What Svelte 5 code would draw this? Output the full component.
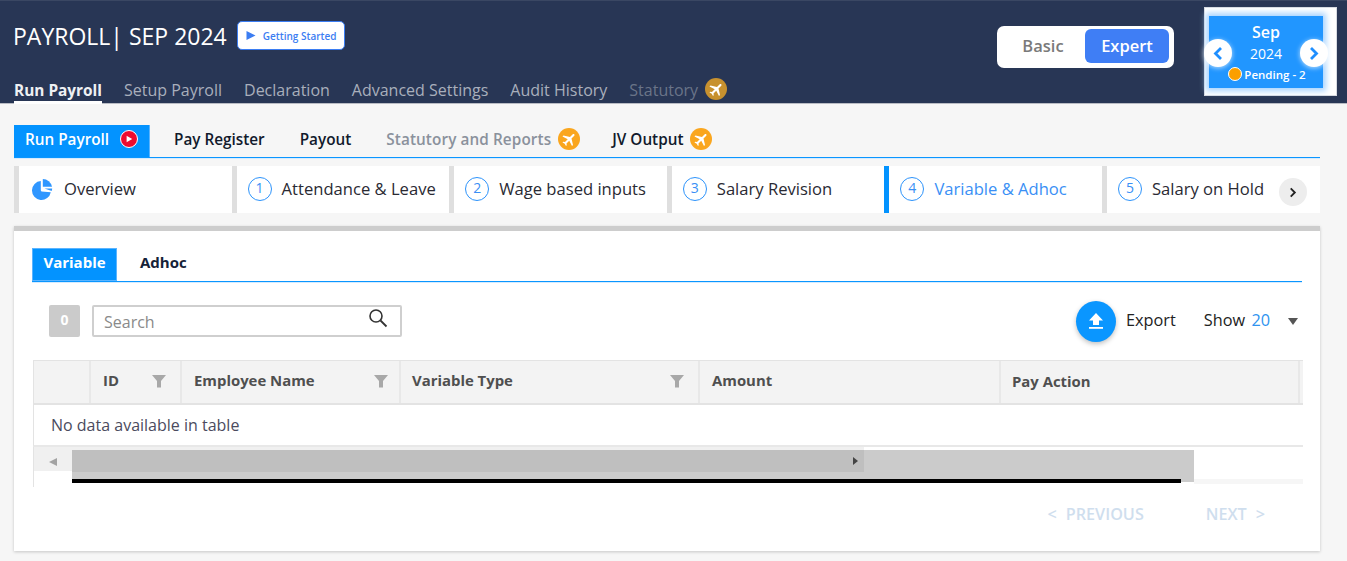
<script>
  const plane = "M21 16v-2l-8-5V3.5c0-.83-.67-1.5-1.5-1.5S10 2.67 10 3.5V9l-8 5v2l8-2.5V19l-2 1.5V22l3.5-1 3.5 1v-1.5L13 19v-5.5l8 2.5z";
  const nav = [
    { label: "Setup Payroll", cls: "" },
    { label: "Declaration", cls: "" },
    { label: "Advanced Settings", cls: "" },
    { label: "Audit History", cls: "" }
  ];
  const steps = [
    { n: 1, label: "Attendance & Leave" },
    { n: 2, label: "Wage based inputs" },
    { n: 3, label: "Salary Revision" },
    { n: 4, label: "Variable & Adhoc", active: true },
    { n: 5, label: "Salary on Hold" }
  ];
  const cols = [
    { label: "ID", w: 91, filter: true },
    { label: "Employee Name", w: 219, filter: true },
    { label: "Variable Type", w: 299, filter: true },
    { label: "Amount", w: 301 },
    { label: "Pay Action", w: 301 }
  ];
</script>

{#snippet planeBadge(cls)}
  <span class="badge {cls}">
    <svg viewBox="0 0 24 24" width="17" height="17"><path d={plane} fill="#fff" transform="rotate(45 12 12)" /></svg>
  </span>
{/snippet}

{#snippet funnel()}
  <svg class="funnel" viewBox="0 0 14 14" width="14" height="14"><path d="M0 1h14L9 7v6.5H5V7z" fill="#a8a8a8" /></svg>
{/snippet}

<div class="page">
  <header class="top">
    <div class="top-left">
      <div class="title-row">
        <h1>PAYROLL| SEP 2024</h1>
        <button class="started">
          <svg viewBox="0 0 10 10" width="10" height="11"><path d="M0.500 0.500 9.500 5 0.500 9.500z" fill="#3b7df2" /></svg>
          Getting Started
        </button>
      </div>
      <nav class="mainnav">
        <span class="navitem current">Run Payroll</span>
        {#each nav as item}
          <span class="navitem">{item.label}</span>
        {/each}
        <span class="navitem dim">Statutory</span>
        {@render planeBadge("muted")}
      </nav>
    </div>
    <div class="top-right">
      <div class="toggle">
        <span class="opt">Basic</span>
        <span class="opt on">Expert</span>
      </div>
      <div class="month-frame">
        <div class="month">
          <div class="m1">Sep</div>
          <div class="m2">2024</div>
          <div class="m3"><i class="dot"></i>Pending - 2</div>
          <span class="arrow prev">
            <svg viewBox="0 0 12 14" width="12" height="15"><path d="M9 1.500 3.500 7 9 12.500" fill="none" stroke="#1f8fff" stroke-width="2.800" /></svg>
          </span>
          <span class="arrow next">
            <svg viewBox="0 0 12 14" width="12" height="15"><path d="M3 1.500 8.500 7 3 12.500" fill="none" stroke="#1f8fff" stroke-width="2.800" /></svg>
          </span>
        </div>
      </div>
    </div>
  </header>

  <div class="content">
    <div class="tabs">
      <span class="tab active">Run Payroll
        <span class="yt"><svg viewBox="0 0 10 10" width="8" height="8"><path d="M2 1 9 5 2 9z" fill="#fff" /></svg></span>
      </span>
      <span class="tab t2">Pay Register</span>
      <span class="tab t3">Payout</span>
      <span class="tab t4 off">Statutory and Reports {@render planeBadge("")}</span>
      <span class="tab t5">JV Output {@render planeBadge("")}</span>
    </div>

    <div class="steps">
      <div class="step">
        <svg class="pie" viewBox="0 0 22 22" width="22" height="22">
          <path d="M9.800 3A9.500 9.500 0 1 0 19.800 14.300L10.500 13.500 9.800 12.500z" fill="#3097ff" />
          <path d="M11.800 1A9.500 9.500 0 0 1 21 8.700H11.800z" fill="#3097ff" />
          <path d="M13.500 10.500H21.200A9.500 9.500 0 0 1 20.700 13z" fill="#3097ff" />
        </svg>
        <span>Overview</span>
      </div>
      {#each steps as s}
        <div class="step" class:current={s.active}>
          <span class="num">{s.n}</span>
          <span>{s.label}</span>
        </div>
      {/each}
      <span class="more">
        <svg viewBox="0 0 8 12" width="8" height="11"><path d="M1.500 1.500 6 6l-4.500 4.500" fill="none" stroke="#222" stroke-width="2" /></svg>
      </span>
    </div>

    <section class="card">
      <div class="subtabs">
        <span class="sub active">Variable</span>
        <span class="sub">Adhoc</span>
      </div>

      <div class="toolbar">
        <span class="count">0</span>
        <div class="search">
          <span class="ph">Search</span>
          <svg viewBox="0 0 20 20" width="20" height="20"><circle cx="8" cy="8" r="6" fill="none" stroke="#333" stroke-width="1.600" /><path d="M12.500 12.500 18.500 18.500" stroke="#333" stroke-width="1.800" /></svg>
        </div>
        <div class="spacer"></div>
        <span class="export-btn">
          <svg viewBox="0 0 16 18" width="16" height="18"><path d="M8 1 15 8.500H11V13H5V8.500H1z" fill="#fff" /><rect x="1" y="15" width="14" height="1.800" fill="#fff" /></svg>
        </span>
        <span class="export">Export</span>
        <span class="show">Show <b>20</b></span>
        <i class="caret"></i>
      </div>

      <div class="table">
        <div class="thead">
          <div class="th first"></div>
          {#each cols as c}
            <div class="th" style="width:{c.w}px">
              <span>{c.label}</span>
              {#if c.filter}{@render funnel()}{/if}
            </div>
          {/each}
        </div>
        <div class="empty">No data available in table</div>
        <div class="scroll">
          <div class="sc-strip"></div>
          <div class="sc-track"></div>
          <div class="sc-thumb"></div>
          <div class="sc-black"></div>
          <div class="sc-light"></div>
          <i class="sc-l"></i>
          <i class="sc-r"></i>
        </div>
      </div>

      <div class="pager">
        <span class="pg prevp"><em>&lt;</em>PREVIOUS</span>
        <span class="pg">NEXT<em class="r">&gt;</em></span>
      </div>
    </section>
  </div>
</div>

<style>
  :global(body) { margin: 0; background: #f6f6f6; }
  .page { width: 1347px; height: 561px; overflow: hidden; font-family: "Open Sans", "Liberation Sans", sans-serif; color: #222; background: #f6f6f6; }

  .top { height: 104px; box-sizing: border-box; background: #283655; border-top: 1px solid #3a4763; border-bottom: 1px solid #b9bcc4; display: flex; justify-content: space-between; }
  .top-left { padding: 20px 0 0 14px; display: flex; flex-direction: column; }
  .title-row { display: flex; align-items: center; gap: 10px; height: 29px; }
  h1 { margin: 0 0 0 -1px; font-size: 23px; font-weight: 400; color: #fff; line-height: 30px; white-space: nowrap; }
  .started { width: 108px; height: 29px; box-sizing: border-box; border: 1px solid #3b7df2; background: #fff; border-radius: 5px; color: #3b7df2; font: 600 10px "Open Sans", sans-serif; display: flex; align-items: center; gap: 7px; padding: 0 0 0 8px; white-space: nowrap; }
  .mainnav { display: flex; align-items: center; margin-top: 24px; height: 30px; }
  .navitem { font-size: 16px; padding-top: 6px; line-height: 21px; color: #a9afbc; margin-right: 22px; white-space: nowrap; border-bottom: 3px solid transparent; }
  .navitem.current { color: #eef0f3; font-weight: 700; border-bottom-color: #fff; font-size: 15.400px; }
  .navitem.dim { color: #6a7488; margin-right: 7px; }

  .badge { display: inline-flex; width: 22px; height: 22px; border-radius: 50%; background: #faa61e; align-items: center; justify-content: center; vertical-align: middle; }
  .badge.muted { background: #c7912f; }

  .top-right { display: flex; padding: 6px 10px 0 0; }
  .toggle { margin-top: 19px; width: 177px; height: 42px; box-sizing: border-box; background: #fff; border-radius: 7px; display: flex; align-items: center; padding: 0 5px 0 0; margin-right: 30px; }
  .opt { font-size: 16.500px; font-weight: 600; color: #7a7a7a; width: 88px; padding-left: 4px; box-sizing: border-box; text-align: center; margin-top: -3px; }
  .opt.on { width: 84px; padding-left: 0; height: 34px; line-height: 33px; border-radius: 6px; background: #3f7ef5; color: #fff; margin-top: -2px; }
  .month-frame { width: 133px; height: 89px; box-sizing: border-box; background: #fff; padding: 8px 13px 7px 4px; border: 1px solid #d8dbe2; }
  .month { position: relative; height: 100%; background: #2196ff; box-shadow: 0 0 6px 3px #a6d3ff; color: #fff; text-align: center; }
  .m1 { font-size: 16px; font-weight: 600; line-height: 20px; padding-top: 6px; }
  .m2 { font-size: 14px; line-height: 20px; margin-top: 2px; }
  .m3 { font-size: 11.500px; font-weight: 600; line-height: 16px; margin-top: 3px; padding-left: 12px; display: flex; justify-content: center; align-items: center; gap: 2px; }
  .dot { width: 12px; height: 12px; border-radius: 50%; background: #fb9f00; border: 1px solid #fff; margin-left: -10px; margin-top: -2px; }
  .arrow { position: absolute; top: 23px; width: 28px; height: 28px; border-radius: 50%; background: #fff; display: flex; align-items: center; justify-content: center; box-shadow: 0 1px 5px rgba(255,255,255,.7); }
  .prev { left: -5px; }
  .next { left: 91px; }

  .content { margin: 0 27px 0 14px; padding-top: 21px; }
  .tabs { display: flex; align-items: center; box-sizing: border-box; border-bottom: 1px solid #0a96ff; box-shadow: 0 1px 0 #d5ebff; height: 33px; }
  .tab { font-size: 15.300px; font-weight: 600; color: #111a2c; white-space: nowrap; display: inline-flex; align-items: center; gap: 7px; line-height: 24px; margin-top: -4px; }
  .tab.active { width: 136px; height: 32px; box-sizing: border-box; background: #0393ff; color: #fff; padding: 0 0 4px 11px; gap: 11px; margin-top: 0; border-right: 1px solid #5ab4ff; }
  .t2 { margin-left: 24px; }
  .t3 { margin-left: 35px; }
  .t4 { margin-left: 35px; }
  .t5 { margin-left: 32px; }
  .off { color: #8a919c; letter-spacing: .1px; }
  .yt { width: 18px; height: 18px; box-sizing: border-box; border-radius: 50%; background: #ee0a30; border: 1px solid #fff; display: inline-flex; align-items: center; justify-content: center; }

  .steps { position: relative; margin-top: 8px; height: 47px; display: flex; background: #fff; }
  .step { width: 217.600px; box-sizing: border-box; border-left: 5px solid #dfdfdf; display: flex; align-items: center; gap: 10px; padding: 0 0 2px 11px; font-size: 16.600px; color: #2a2a33; white-space: nowrap; flex: none; }
  .step:last-of-type { width: 210px; }
  .step.current { border-left-color: #0393ff; color: #3a8ff5; }
  .pie { margin: 0 1px; }
  .num { width: 24px; height: 24px; box-sizing: border-box; border: 1.500px solid #2d93fb; border-radius: 50%; color: #3a8ff5; font-size: 14px; line-height: 19px; text-align: center; flex: none; }
  .more { position: absolute; left: 1265px; top: 12px; width: 28px; height: 28px; border-radius: 50%; background: #ededed; display: flex; align-items: center; justify-content: center; }

  .card { margin-top: 13px; height: 325px; box-sizing: border-box; background: #fff; border-top: 5px solid #cdcdcd; box-shadow: 0 1px 3px rgba(0,0,0,.2); padding: 17px 18px 0 18px; }
  .subtabs { display: flex; align-items: center; height: 33px; border-bottom: 1px solid #0a96ff; box-shadow: 0 1px 0 #d5ebff; }
  .sub { font-size: 15px; font-weight: 700; color: #152238; margin-left: 23px; line-height: 22px; margin-top: -6px; }
  .sub.active { margin: 0; width: 85px; height: 33px; line-height: 26px; text-align: center; background: #0393ff; color: #fff; box-sizing: border-box; border: 1px solid #5ab4ff; }

  .toolbar { display: flex; align-items: center; margin-top: 18px; height: 42px; padding: 0 4px 0 17px; }
  .count { width: 31px; height: 32px; margin-top: -1px; background: #cbcbcb; color: #fff; border-radius: 2px; font-size: 14px; font-weight: 700; text-align: center; line-height: 29px; }
  .search { margin-left: 12px; margin-top: -1px; width: 310px; height: 32px; box-sizing: border-box; border: 2px solid #cfcfcf; border-radius: 2px; display: flex; align-items: center; justify-content: space-between; padding: 0 12px 0 10px; }
  .ph { font-size: 16px; color: #8a8a8a; margin-top: 2px; }
  .search svg { margin-top: -5px; }
  .spacer { flex: 1; }
  .export-btn { width: 40px; height: 41px; border-radius: 50%; background: #0a96ff; box-shadow: 0 2px 5px rgba(0,0,0,.25); display: flex; align-items: center; justify-content: center; }
  .export { margin-left: 10px; font-size: 16.300px; color: #222; margin-top: -2px; }
  .show { margin-left: 28px; font-size: 16.300px; color: #222; margin-top: -3px; }
  .show b { font-weight: 400; color: #2f93ef; margin-left: 2px; }
  .caret { margin-left: 18px; margin-right: 0; width: 0; height: 0; border: 5px solid transparent; border-top: 7px solid #555; border-bottom: 0; }

  .table { margin-top: 18px; margin-left: 1px; width: 1270px; }
  .thead { display: flex; height: 45px; box-sizing: border-box; background: #f3f3f3; border: 1px solid #e3e3e3; border-width: 1px 0 2px 1px; padding-bottom: 4px; }
  .th { flex: none; box-sizing: border-box; border-left: 2px solid #e8e8e8; margin-bottom: -4px; padding-bottom: 5px; display: flex; align-items: center; justify-content: space-between; padding-left: 11px; padding-right: 14px; font-size: 14.900px; font-weight: 700; color: #4f4f4f; white-space: nowrap; }
  .th:nth-child(2), .th:nth-child(3), .th:nth-child(5) { padding-left: 12px; }
  .th:nth-child(3) { padding-right: 11px; }
  .th:last-child { border-right: 2px solid #e8e8e8; padding-bottom: 3px; }
  .th.first { width: 55px; border-left: 0; }
  .funnel { margin-top: 2px; }
  .empty { height: 42px; box-sizing: border-box; border-left: 1px solid #e3e3e3; border-bottom: 2px solid #e8e8e8; padding: 9px 0 0 17px; font-size: 16px; line-height: 22px; color: #4b4b5e; }
  .scroll { position: relative; height: 40px; border-left: 1px solid #e3e3e3; box-sizing: border-box; }
  .sc-strip { position: absolute; left: 0; top: 0; width: 830px; height: 24px; background: #f0f0f0; }
  .sc-track { position: absolute; left: 38px; top: 3px; width: 1122px; height: 32px; background: #cbcbcb; }
  .sc-thumb { position: absolute; left: 38px; top: 3px; width: 792px; height: 22px; background: #bfbfbf; }
  .sc-black { position: absolute; left: 38px; top: 32px; width: 1109px; height: 4px; background: #000; }
  .sc-light { position: absolute; left: 1160px; top: 32px; width: 109px; height: 5px; background: #f6f6f6; }
  .sc-l { position: absolute; left: 15px; top: 11px; border: 4px solid transparent; border-right: 8px solid #a3a3a3; border-left: 0; }
  .sc-r { position: absolute; left: 819px; top: 10px; border: 4.500px solid transparent; border-left: 5px solid #444; border-right: 0; }

  .pager { display: flex; justify-content: flex-end; gap: 62px; margin-top: 16px; padding-right: 37px; }
  .pg { font-size: 16.200px; font-weight: 600; color: #cfdeee; line-height: 22px; }
  .pg em { font-style: normal; margin-right: 9px; }
  .pg em.r { margin: 0 0 0 9px; }
</style>
